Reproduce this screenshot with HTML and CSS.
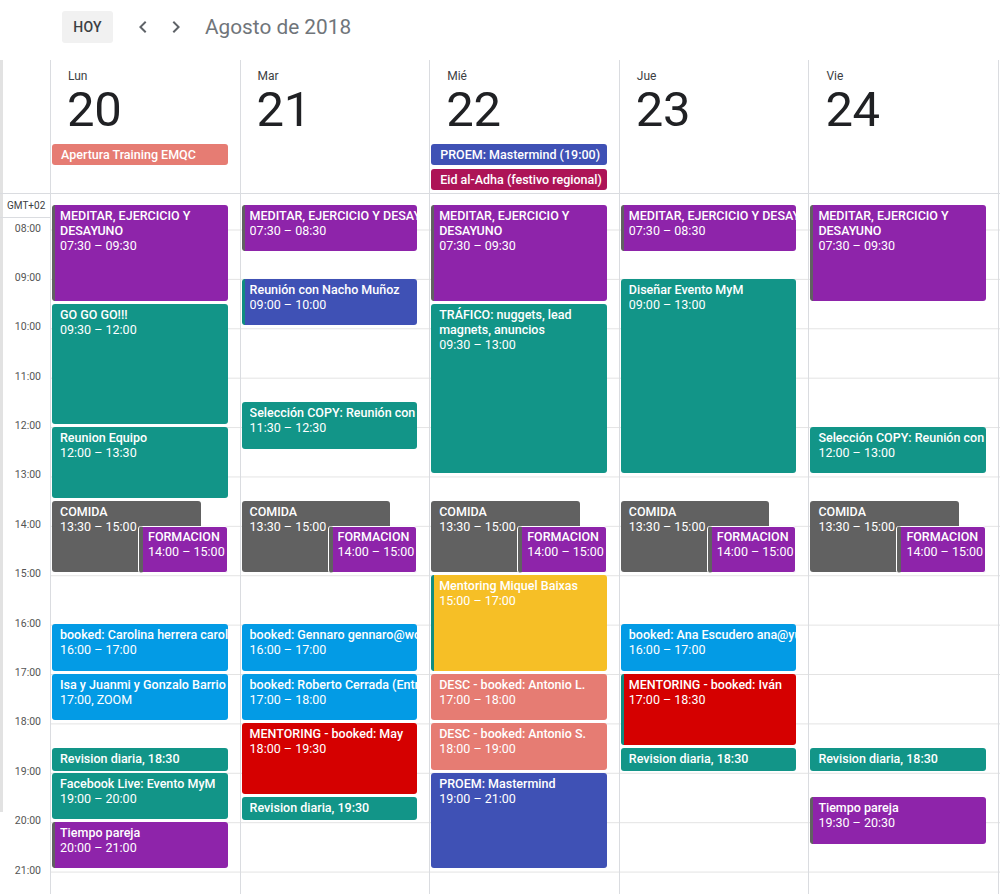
FILE: index.html
```html
<!DOCTYPE html>
<html lang="es">
<head>
<meta charset="utf-8">
<title>Agosto de 2018</title>
<link rel="stylesheet" href="styles.css">
</head>
<body>
<div class="topbar">
  <button class="today">HOY</button>
  <span class="nav">
    <svg viewBox="0 0 24 24" width="24" height="24"><path d="M15.41 7.41L14 6l-6 6 6 6 1.41-1.41L10.83 12z"/></svg>
  </span>
  <span class="nav nav2">
    <svg viewBox="0 0 24 24" width="24" height="24"><path d="M10 6L8.59 7.41 13.17 12l-4.58 4.59L10 18l6-6z"/></svg>
  </span>
  <h1 class="title">Agosto de 2018</h1>
</div>

<div class="cal">
  <div class="head">
    <div class="gutter-head"></div>
    <div class="dayhead">
      <div class="dname">Lun</div>
      <div class="dnum">20</div>
      <div class="allday">
        <div class="ad salmon">Apertura Training EMQC</div>
      </div>
    </div>
    <div class="dayhead">
      <div class="dname">Mar</div>
      <div class="dnum">21</div>
      <div class="allday"></div>
    </div>
    <div class="dayhead">
      <div class="dname">Mié</div>
      <div class="dnum">22</div>
      <div class="allday">
        <div class="ad blue">PROEM: Mastermind (19:00)</div>
        <div class="ad magenta">Eid al-Adha (festivo regional)</div>
      </div>
    </div>
    <div class="dayhead">
      <div class="dname">Jue</div>
      <div class="dnum">23</div>
      <div class="allday"></div>
    </div>
    <div class="dayhead">
      <div class="dname">Vie</div>
      <div class="dnum">24</div>
      <div class="allday"></div>
    </div>
    <div class="dayhead"></div>
  </div>

  <div class="body">
    <div class="times">
      <div class="gmt">GMT+02</div>
      <div class="tl">08:00</div>
      <div class="tl">09:00</div>
      <div class="tl">10:00</div>
      <div class="tl">11:00</div>
      <div class="tl">12:00</div>
      <div class="tl">13:00</div>
      <div class="tl">14:00</div>
      <div class="tl">15:00</div>
      <div class="tl">16:00</div>
      <div class="tl">17:00</div>
      <div class="tl">18:00</div>
      <div class="tl">19:00</div>
      <div class="tl">20:00</div>
      <div class="tl">21:00</div>
    </div>

    <!-- Lunes -->
    <div class="day">
      <div class="ev purple sgray" style="grid-row: 2 / 6"><div class="t">MEDITAR, EJERCICIO Y DESAYUNO</div><div class="h">07:30 – 09:30</div></div>
      <div class="ev teal" style="grid-row: 6 / 11"><div class="t">GO GO GO!!!</div><div class="h">09:30 – 12:00</div></div>
      <div class="ev teal" style="grid-row: 11 / 14"><div class="t">Reunion Equipo</div><div class="h">12:00 – 13:30</div></div>
      <div class="ev gray comida" style="grid-row: 14 / 17"><div class="t">COMIDA</div><div class="h">13:30 – 15:00</div></div>
      <div class="ev purple formacion" style="grid-row: 15 / 17"><div class="t one">FORMACION</div><div class="h one">14:00 – 15:00</div></div>
      <div class="ev lblue" style="grid-row: 19 / 21"><div class="t one">booked: Carolina herrera carolina@gmail.com</div><div class="h">16:00 – 17:00</div></div>
      <div class="ev lblue" style="grid-row: 21 / 23"><div class="t one">Isa y Juanmi y Gonzalo Barrio</div><div class="h">17:00, ZOOM</div></div>
      <div class="ev teal short" style="grid-row: 24 / 25"><div class="t one">Revision diaria, 18:30</div></div>
      <div class="ev teal" style="grid-row: 25 / 27"><div class="t one">Facebook Live: Evento MyM</div><div class="h">19:00 – 20:00</div></div>
      <div class="ev purple sgray" style="grid-row: 27 / 29"><div class="t one">Tiempo pareja</div><div class="h">20:00 – 21:00</div></div>
    </div>

    <!-- Martes -->
    <div class="day">
      <div class="ev purple sgray" style="grid-row: 2 / 4"><div class="t one">MEDITAR, EJERCICIO Y DESAYUNO</div><div class="h">07:30 – 08:30</div></div>
      <div class="ev blue steal" style="grid-row: 5 / 7"><div class="t one">Reunión con Nacho Muñoz</div><div class="h">09:00 – 10:00</div></div>
      <div class="ev teal" style="grid-row: 10 / 12"><div class="t one">Selección COPY: Reunión con (cliente)</div><div class="h">11:30 – 12:30</div></div>
      <div class="ev gray comida" style="grid-row: 14 / 17"><div class="t">COMIDA</div><div class="h">13:30 – 15:00</div></div>
      <div class="ev purple formacion" style="grid-row: 15 / 17"><div class="t one">FORMACION</div><div class="h one">14:00 – 15:00</div></div>
      <div class="ev lblue" style="grid-row: 19 / 21"><div class="t one">booked: Gennaro gennaro@wordpress.com</div><div class="h">16:00 – 17:00</div></div>
      <div class="ev lblue" style="grid-row: 21 / 23"><div class="t one">booked: Roberto Cerrada (Entrevista)</div><div class="h">17:00 – 18:00</div></div>
      <div class="ev red" style="grid-row: 23 / 26"><div class="t">MENTORING - booked: May</div><div class="h">18:00 – 19:30</div></div>
      <div class="ev teal short" style="grid-row: 26 / 27"><div class="t one">Revision diaria, 19:30</div></div>
    </div>

    <!-- Miércoles -->
    <div class="day">
      <div class="ev purple sgray" style="grid-row: 2 / 6"><div class="t">MEDITAR, EJERCICIO Y DESAYUNO</div><div class="h">07:30 – 09:30</div></div>
      <div class="ev teal" style="grid-row: 6 / 13"><div class="t">TRÁFICO: nuggets, lead magnets, anuncios</div><div class="h">09:30 – 13:00</div></div>
      <div class="ev gray comida" style="grid-row: 14 / 17"><div class="t">COMIDA</div><div class="h">13:30 – 15:00</div></div>
      <div class="ev purple formacion" style="grid-row: 15 / 17"><div class="t one">FORMACION</div><div class="h one">14:00 – 15:00</div></div>
      <div class="ev yellow steal" style="grid-row: 17 / 21"><div class="t">Mentoring Miquel Baixas</div><div class="h">15:00 – 17:00</div></div>
      <div class="ev salmon" style="grid-row: 21 / 23"><div class="t one">DESC - booked: Antonio L.</div><div class="h">17:00 – 18:00</div></div>
      <div class="ev salmon" style="grid-row: 23 / 25"><div class="t one">DESC - booked: Antonio S.</div><div class="h">18:00 – 19:00</div></div>
      <div class="ev blue" style="grid-row: 25 / 29"><div class="t">PROEM: Mastermind</div><div class="h">19:00 – 21:00</div></div>
    </div>

    <!-- Jueves -->
    <div class="day">
      <div class="ev purple sgray" style="grid-row: 2 / 4"><div class="t one">MEDITAR, EJERCICIO Y DESAYUNO</div><div class="h">07:30 – 08:30</div></div>
      <div class="ev teal" style="grid-row: 5 / 13"><div class="t">Diseñar Evento MyM</div><div class="h">09:00 – 13:00</div></div>
      <div class="ev gray comida" style="grid-row: 14 / 17"><div class="t">COMIDA</div><div class="h">13:30 – 15:00</div></div>
      <div class="ev purple formacion" style="grid-row: 15 / 17"><div class="t one">FORMACION</div><div class="h one">14:00 – 15:00</div></div>
      <div class="ev lblue" style="grid-row: 19 / 21"><div class="t one">booked: Ana Escudero ana@yunke.com</div><div class="h">16:00 – 17:00</div></div>
      <div class="ev red steal" style="grid-row: 21 / 24"><div class="t">MENTORING - booked: Iván</div><div class="h">17:00 – 18:30</div></div>
      <div class="ev teal short" style="grid-row: 24 / 25"><div class="t one">Revision diaria, 18:30</div></div>
    </div>

    <!-- Viernes -->
    <div class="day">
      <div class="ev purple sgray" style="grid-row: 2 / 6"><div class="t">MEDITAR, EJERCICIO Y DESAYUNO</div><div class="h">07:30 – 09:30</div></div>
      <div class="ev teal" style="grid-row: 11 / 13"><div class="t one">Selección COPY: Reunión con (cliente)</div><div class="h">12:00 – 13:00</div></div>
      <div class="ev gray comida" style="grid-row: 14 / 17"><div class="t">COMIDA</div><div class="h">13:30 – 15:00</div></div>
      <div class="ev purple formacion" style="grid-row: 15 / 17"><div class="t one">FORMACION</div><div class="h one">14:00 – 15:00</div></div>
      <div class="ev teal short" style="grid-row: 24 / 25"><div class="t one">Revision diaria, 18:30</div></div>
      <div class="ev purple sgray" style="grid-row: 26 / 28"><div class="t one">Tiempo pareja</div><div class="h">19:30 – 20:30</div></div>
    </div>

    <!-- Sábado (fuera del encuadre) -->
    <div class="day">
      <div class="ev gray" style="grid-row: 2 / 4"></div>
      <div class="ev gray" style="grid-row: 14 / 17"></div>
    </div>
  </div>
</div>
</body>
</html>
```

FILE: styles.css
```css
* { box-sizing: border-box; }

html, body {
  margin: 0;
  padding: 0;
  width: 1000px;
  height: 894px;
  overflow: hidden;
  background: #fff;
  font-family: Roboto, "Noto Sans", "Liberation Sans", sans-serif;
  color: #3c4043;
}

/* ---------- top bar ---------- */
.topbar {
  height: 60px;
  display: flex;
  align-items: flex-start;
  padding: 11px 0 0 62px;
}

.today {
  width: 51px;
  height: 32px;
  border: 0;
  border-radius: 3px;
  background: #f1f1f1;
  color: #3c4043;
  font-family: inherit;
  font-size: 14px;
  font-weight: 500;
  letter-spacing: 0.2px;
  padding: 0;
  margin-right: 18px;
}

.nav {
  display: flex;
  width: 24px;
  height: 24px;
  margin-top: 4px;
}
.nav svg { fill: #5f6368; }
.nav2 { margin-left: 9px; margin-right: 17px; }

.title {
  margin: 0;
  font-size: 20.8px;
  font-weight: 400;
  line-height: 32px;
  color: #70757a;
}

/* ---------- calendar ---------- */
.cal {
  background-image: linear-gradient(to right, #e2e2e2 3px, transparent 3px);
  background-size: 3px 752px;
  background-repeat: no-repeat;
  width: 1188px;
}

.head,
.body {
  display: grid;
  grid-template-columns: 50px repeat(6, 189.6px);
}

.head {
  height: 134px;
  border-bottom: 1px solid #dadce0;
}

.dayhead {
  border-left: 1px solid #dadce0;
  padding-top: 8px;
}

.dname {
  height: 16px;
  line-height: 16px;
  font-size: 12px;
  padding-left: 17px;
  color: #3c4043;
}

.dnum {
  height: 52px;
  line-height: 52px;
  font-size: 49px;
  padding-left: 16px;
  color: #202124;
  letter-spacing: -0.3px;
}

.allday {
  margin-top: 8px;
  display: flex;
  flex-direction: column;
  gap: 4px;
  padding: 0 12px 0 1px;
}

.ad {
  height: 21px;
  line-height: 21px;
  border-radius: 3px;
  color: #fff;
  font-size: 12.5px;
  font-weight: 500;
  padding-left: 9px;
  white-space: nowrap;
  overflow: hidden;
}

.body {
  height: 700px;
  overflow: hidden;
}

.times {
  display: flex;
  flex-direction: column;
}

.gmt {
  height: 24px;
  line-height: 24px;
  border-bottom: 1px solid #dadce0;
  font-size: 10px;
  color: #3c4043;
  padding-left: 7px;
  margin-bottom: 3.5px;
}

.tl {
  flex: 0 0 49.4px;
  line-height: 14px;
  font-size: 10.5px;
  color: #555;
  text-align: right;
  padding-right: 9px;
}

.day {
  border-left: 1px solid #dadce0;
  display: grid;
  grid-template-columns: 1fr;
  grid-template-rows: 10.8px repeat(28, 24.7px);
  background-image: linear-gradient(to bottom, #e3e3e3 0, #e3e3e3 1px, transparent 1px);
  background-size: 100% 49.4px;
  background-position: 0 35.5px;
  background-repeat: repeat-y;
}

/* ---------- events ---------- */
.ev {
  grid-column: 1;
  margin: 0 12px 3px 1px;
  border-radius: 3px;
  color: #fff;
  font-size: 12.5px;
  line-height: 15px;
  padding: 3px 0 0 8px;
  overflow: hidden;
  min-width: 0;
}

.ev .t { font-weight: 500; }
.ev .one { white-space: nowrap; overflow: hidden; }
.ev .h { white-space: nowrap; overflow: hidden; }

.ev.short { margin-bottom: 2px; }

.sgray { border-left: 3px solid #616161; padding-left: 5px; }
.steal { border-left: 3px solid #0f8c80; padding-left: 5px; }

.comida { margin-right: 39px; }
.formacion {
  margin-left: 88px;
  margin-bottom: 2px;
  border: 1px solid #fff;
  border-left: 4px solid #616161;
  box-shadow: -1px 0 0 #fff;
  padding-top: 2px;
  padding-left: 5px;
}

/* ---------- colours ---------- */
.purple { background: #8e24aa; }
.teal   { background: #129588; }
.gray   { background: #616161; }
.lblue  { background: #039be5; }
.blue   { background: #3f51b5; }
.red    { background: #d50000; }
.yellow { background: #f6bf26; }
.salmon { background: #e67c73; }
.magenta{ background: #ad1457; }
```
